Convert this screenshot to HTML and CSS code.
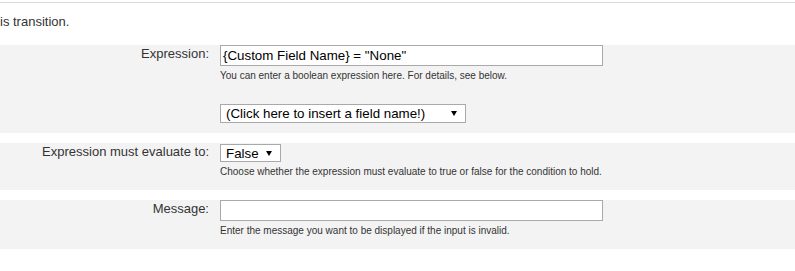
FILE: index.html
```html
<!DOCTYPE html>
<html lang="en">
<head>
    <meta charset="UTF-8">
    <title>Condition</title>
    <link rel="stylesheet" href="styles.css">
</head>
<body>

<div class="page">
    <p class="intro">is transition.</p>

    <div class="row">
        <div class="label">Expression:</div>
        <div class="field">
            <input type="text" class="text-input" value="{Custom Field Name} = &quot;None&quot;">
            <div class="help">You can enter a boolean expression here. For details, see below.</div>
            <div class="select select-wide">
                <span>(Click here to insert a field name!)</span>
                <span class="arrow"></span>
            </div>
        </div>
    </div>

    <div class="row">
        <div class="label">Expression must evaluate to:</div>
        <div class="field">
            <div class="select select-small">
                <span>False</span>
                <span class="arrow"></span>
            </div>
            <div class="help">Choose whether the expression must evaluate to true or false for the condition to hold.</div>
        </div>
    </div>

    <div class="row">
        <div class="label">Message:</div>
        <div class="field">
            <input type="text" class="text-input" value="">
            <div class="help">Enter the message you want to be displayed if the input is invalid.</div>
        </div>
    </div>
</div>

</body>
</html>
```

FILE: styles.css
```css
body {
    margin: 0;
    font-family: Arial, "Liberation Sans", sans-serif;
    font-size: 13px;
    color: #333;
    background-color: white;
}

.page {
    margin-top: 2px;
    border-top: 1px solid #dcdcdc;
    padding-top: 11px;
}

.intro {
    margin: 0 0 15px;
    line-height: 16px;
}

.row {
    display: flex;
    background-color: #f3f3f3;
    padding-bottom: 10px;
    margin-bottom: 10px;
}

.label {
    width: 209px;
    text-align: right;
    padding-top: 1px;
    line-height: 15px;
}

.field {
    margin-left: 11px;
    display: flex;
    flex-direction: column;
    align-items: flex-start;
}

.text-input {
    box-sizing: border-box;
    width: 383px;
    height: 21px;
    margin: 0;
    padding: 1px 2px;
    border: 1px solid #a9a9a9;
    font-family: Arial, "Liberation Sans", sans-serif;
    font-size: 13.333px;
    color: black;
    background-color: white;
    outline: none;
}

.help {
    font-size: 10px;
    line-height: 12px;
    margin: 4px 0 2px;
    color: #333;
}

.select {
    box-sizing: border-box;
    display: flex;
    align-items: center;
    height: 19px;
    padding: 0 8px 0 5px;
    border: 1px solid #a9a9a9;
    background-color: white;
    font-size: 13.333px;
    color: black;
}

.select-wide {
    width: 246px;
    margin-top: 20px;
}

.select-small {
    height: 18px;
    margin-top: 1px;
}

.arrow {
    margin-left: 7px;
    width: 0;
    height: 0;
    border-left: 3px solid transparent;
    border-right: 3px solid transparent;
    border-top: 5px solid black;
}

.select-wide .arrow {
    margin-left: auto;
}
```
